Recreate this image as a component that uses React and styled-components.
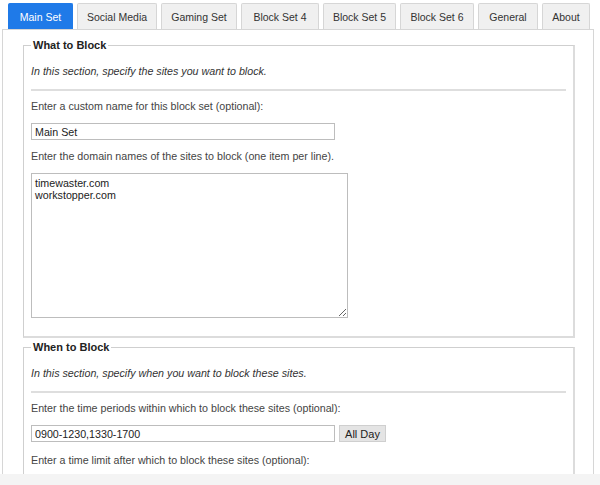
import styled, { createGlobalStyle } from "styled-components";

const GlobalStyle = createGlobalStyle`
  html, body {
    margin: 0;
    padding: 0;
    background: #f4f4f4;
  }
  body {
    font-family: "Liberation Sans", Arial, sans-serif;
    color: #333;
  }
`;

const tabs = [
  { label: "Main Set", width: 65 },
  { label: "Social Media", width: 80 },
  { label: "Gaming Set", width: 76 },
  { label: "Block Set 4", width: 78 },
  { label: "Block Set 5", width: 73 },
  { label: "Block Set 6", width: 74 },
  { label: "General", width: 60 },
  { label: "About", width: 48 },
];

export default function App() {
  return (
    <Page>
      <GlobalStyle />
      <TabBar>
        {tabs.map((t, i) => (
          <Tab key={t.label} $active={i === 0} $width={t.width}>
            {t.label}
          </Tab>
        ))}
      </TabBar>
      <Panel>
        <Fieldset>
          <Legend>What to Block</Legend>
          <Intro>In this section, specify the sites you want to block.</Intro>
          <Rule />
          <Label>Enter a custom name for this block set (optional):</Label>
          <TextInput defaultValue="Main Set" />
          <Label>Enter the domain names of the sites to block (one item per line).</Label>
          <Sites defaultValue={"timewaster.com\nworkstopper.com"} />
        </Fieldset>
        <Fieldset>
          <Legend>When to Block</Legend>
          <Intro>In this section, specify when you want to block these sites.</Intro>
          <Rule />
          <Label>Enter the time periods within which to block these sites (optional):</Label>
          <Row>
            <TextInput defaultValue="0900-1230,1330-1700" />
            <Button>All Day</Button>
          </Row>
          <Label>Enter a time limit after which to block these sites (optional):</Label>
        </Fieldset>
      </Panel>
    </Page>
  );
}

const Page = styled.div`
  width: 600px;
  height: 474px;
  overflow: hidden;
  background: #fff;
`;

const TabBar = styled.div`
  display: flex;
  gap: 4px;
  padding: 3px 0 0 8px;
  height: 26px;
  align-items: stretch;
`;

const Tab = styled.div`
  display: flex;
  align-items: center;
  justify-content: center;
  flex-shrink: 0;
  width: ${(p) => p.$width}px;
  box-sizing: border-box;
  white-space: nowrap;
  font-size: 10.5px;
  border: 1px solid ${(p) => (p.$active ? "#1f7ae8" : "#d6d6d6")};
  border-bottom: none;
  background: ${(p) => (p.$active ? "#1f7ae8" : "#f0f0f0")};
  color: ${(p) => (p.$active ? "#fff" : "#333")};
  border-radius: 2px 2px 0 0;
`;

const Panel = styled.div`
  margin-left: 2px;
  width: 592px;
  border: 1px solid #d6d6d6;
  border-bottom: none;
  padding: 8px 18px 0 20px;
  box-sizing: border-box;
  height: 445px;
`;

const Fieldset = styled.fieldset`
  margin: 0 0 2px 0;
  padding: 0 7px 18px 7px;
  border-style: solid;
  border-width: 1px 2px 2px 1px;
  border-color: #cfcfcf #dcdcdc #dcdcdc #cfcfcf;
`;

const Legend = styled.legend`
  font-size: 11px;
  font-weight: bold;
  color: #222;
  padding: 0 2px;
  line-height: 14px;
`;

const Intro = styled.p`
  margin: 12px 0 0;
  font-size: 10.7px;
  line-height: 14px;
  font-style: italic;
  color: #333;
`;

const Rule = styled.hr`
  margin: 11px 0 8px;
  border: none;
  border-top: 2px solid #dedede;
  height: 0;
`;

const Label = styled.p`
  margin: 0 0 10px;
  font-size: 10.7px;
  line-height: 14px;
  color: #444;
`;

const TextInput = styled.input`
  display: block;
  width: 304px;
  height: 17px;
  box-sizing: border-box;
  border: 1px solid #bdbdbd;
  padding: 0 3px;
  font-family: "Liberation Sans", Arial, sans-serif;
  font-size: 10.7px;
  color: #222;
  margin: 0 0 9px;
`;

const Sites = styled.textarea`
  display: block;
  width: 317px;
  height: 145px;
  box-sizing: border-box;
  border: 1px solid #bdbdbd;
  padding: 3px 3px;
  font-family: "Liberation Sans", Arial, sans-serif;
  font-size: 10.7px;
  line-height: 12px;
  color: #222;
  margin: 2px 0 0;
  resize: both;
`;

const Row = styled.div`
  display: flex;
  gap: 4px;
  align-items: flex-start;
  margin-bottom: 11px;

  & > input {
    margin: 0;
  }
`;

const Button = styled.button`
  height: 17px;
  width: 47px;
  padding: 0;
  border: 1px solid #cfcfcf;
  background: #e4e4e4;
  font-family: "Liberation Sans", Arial, sans-serif;
  font-size: 11px;
  color: #222;
`;
